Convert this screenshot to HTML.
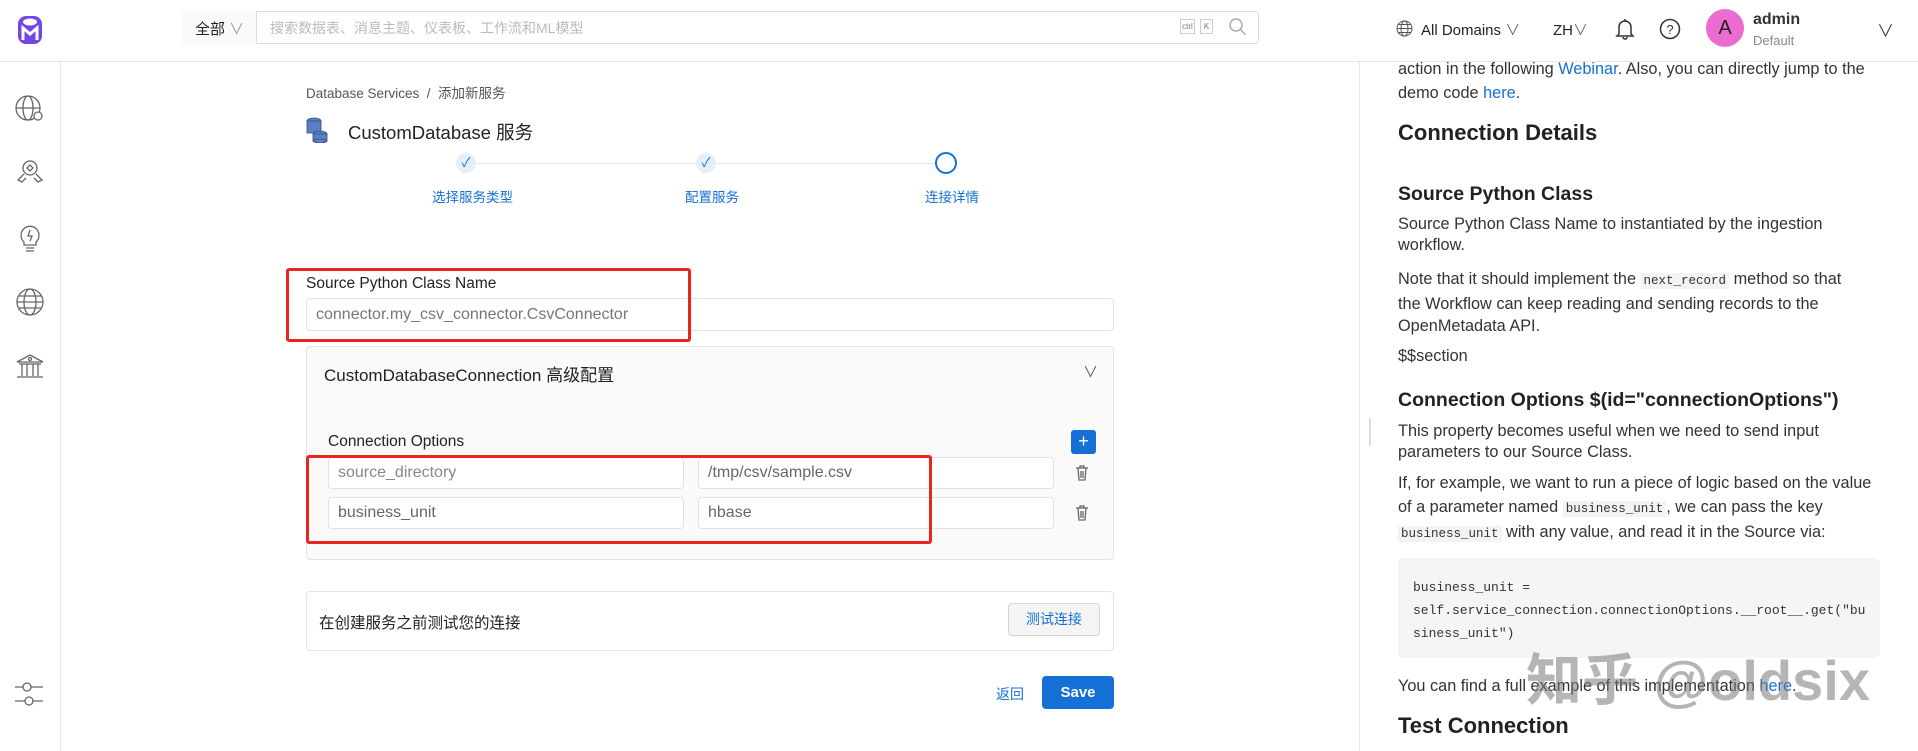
<!DOCTYPE html>
<html><head><meta charset="utf-8"><style>
*{box-sizing:border-box;margin:0;padding:0}
body{width:1918px;height:751px;overflow:hidden;background:#fff;font-family:"Liberation Sans","Noto Sans CJK SC",sans-serif;color:#222;position:relative}
.a{position:absolute}
.hdr{left:0;top:0;width:1918px;height:62px;border-bottom:1px solid #e6e6e6;background:#fff}
.side{left:0;top:62px;width:61px;height:689px;border-right:1px solid #e8e8e8}
.inp{position:absolute;border:1px solid #e2e2e2;border-radius:4px;background:#fff;font-size:16px;color:#777;padding-left:9px;display:flex;align-items:center}
.rp{left:1398px;font-size:16.3px;color:#333;line-height:24px;width:510px;white-space:nowrap}
.h2{font-size:22px;font-weight:bold;color:#222}
.h3{font-size:19.5px;font-weight:bold;color:#222}
code{font-family:"Liberation Mono",monospace;font-size:12.5px;background:#f3f3f3;padding:1px 3px}
a{color:#1570d6;text-decoration:none}
</style></head><body>
<div class="a hdr"></div>
<svg class="a" style="left:17px;top:14px" width="26" height="32" viewBox="0 0 26 32"><rect x="1" y="2" width="24" height="28" rx="8" fill="#7147e8"/><ellipse cx="13" cy="8" rx="7" ry="3.5" fill="#fff"/><path d="M6 26V14l7 6 7-6v12" stroke="#fff" stroke-width="3" fill="none"/></svg>
<div class="a" style="left:182px;top:11px;width:1077px;height:33px;border:1px solid #ddd;border-radius:4px"></div>
<div class="a" style="left:182px;top:11px;width:75px;height:33px;border-right:1px solid #ddd;background:#fafafa;font-size:15px;padding:7px 0 0 13px">全部 <span style="color:#999">∨</span></div>
<div class="a" style="left:270px;top:18px;font-size:14px;color:#bbb">搜索数据表、消息主题、仪表板、工作流和ML模型</div>
<div class="a" style="left:1180px;top:19px;width:15px;height:15px;border:1px solid #ccc;font-size:8px;color:#777;text-align:center;line-height:13px">ctrl</div>
<div class="a" style="left:1200px;top:19px;width:13px;height:15px;border:1px solid #ccc;font-size:8px;color:#777;text-align:center;line-height:13px">K</div>
<svg class="a" style="left:1228px;top:17px" width="20" height="20"><circle cx="8" cy="8" r="6" stroke="#aaa" stroke-width="1.5" fill="none"/><path d="M12.5 12.5l5 5" stroke="#aaa" stroke-width="1.5"/></svg>
<svg class="a" style="left:1396px;top:20px" width="17" height="17"><circle cx="8.5" cy="8.5" r="7.5" stroke="#555" fill="none"/><ellipse cx="8.5" cy="8.5" rx="3.5" ry="7.5" stroke="#555" fill="none"/><path d="M1 8.5h15M2.5 4.5h12M2.5 12.5h12" stroke="#555"/></svg>
<div class="a" style="left:1421px;top:19px;font-size:15px">All Domains <span style="color:#666">∨</span></div>
<div class="a" style="left:1553px;top:19px;font-size:15px">ZH<span style="color:#666">∨</span></div>
<svg class="a" style="left:1614px;top:17px" width="22" height="24"><path d="M5 17V10a6 6 0 0 1 12 0v7l2 2H3z M9 20a2 2 0 0 0 4 0 M11 2v2" stroke="#333" stroke-width="1.5" fill="none"/></svg>
<svg class="a" style="left:1659px;top:18px" width="22" height="22"><circle cx="11" cy="11" r="9.5" stroke="#333" stroke-width="1.5" fill="none"/><text x="11" y="16" font-size="13" text-anchor="middle" fill="#333" font-family="Liberation Sans">?</text></svg>
<div class="a" style="left:1706px;top:9px;width:38px;height:38px;border-radius:50%;background:#ec6bd0;color:#222;font-size:20px;text-align:center;line-height:38px">A</div>
<div class="a" style="left:1753px;top:11px;font-size:16px;font-weight:bold;color:#333">admin</div>
<div class="a" style="left:1753px;top:33px;font-size:13px;color:#888">Default</div>
<div class="a" style="left:1877px;top:17px;font-size:17px;color:#444">∨</div>
<div class="a side"></div>
<svg class="a" style="left:14px;top:94px" width="34" height="300" fill="none" stroke="#666" stroke-width="1.3">
<circle cx="14" cy="14" r="12"/><ellipse cx="14" cy="14" rx="5" ry="12"/><path d="M2 14h24"/><circle cx="24" cy="22" r="4" fill="#fff"/>
<g transform="translate(0,64)"><circle cx="16" cy="10" r="7"/><path d="M13 10l3-3 3 3-3 3z M10 16l-6 6 4 2 4-4 M22 16l6 6-4 2-4-4"/></g>
<g transform="translate(0,128)"><path d="M10 20a9 9 0 1 1 12 0v3h-12z M12 26h8 M12 29h8 M16 8l-2 6h4l-2 5"/></g>
<g transform="translate(0,194)"><circle cx="16" cy="14" r="13"/><ellipse cx="16" cy="14" rx="6" ry="13"/><path d="M3 14h26 M5 8h22 M5 20h22"/></g>
<g transform="translate(0,258)"><path d="M3 10L16 3l13 7z M5 12h22 M8 12v12 M13 12v12 M19 12v12 M24 12v12 M3 25h26"/><circle cx="16" cy="7" r="1.5"/></g>
</svg>
<svg class="a" style="left:15px;top:680px" width="30" height="30" fill="none" stroke="#666" stroke-width="1.3"><path d="M0 7h8M16 7h12M0 21h10M18 21h10"/><circle cx="12" cy="7" r="4"/><circle cx="14" cy="21" r="4"/></svg>
<div class="a" style="left:306px;top:82px;font-size:13.5px;color:#555">Database Services &nbsp;/&nbsp; 添加新服务</div>
<svg class="a" style="left:306px;top:117px" width="22" height="26"><g fill="#5b7fc0" stroke="#2f4f8a" stroke-width=".8"><ellipse cx="8" cy="4" rx="7" ry="3"/><rect x="1" y="4" width="14" height="12"/><ellipse cx="14" cy="17" rx="7" ry="3"/><rect x="7" y="17" width="14" height="7"/><ellipse cx="14" cy="24" rx="7" ry="2"/></g></svg>
<div class="a" style="left:348px;top:119px;font-size:18.5px;color:#222">CustomDatabase 服务</div>
<div class="a" style="left:476px;top:163px;width:460px;height:1px;background:#dde8f5"></div>
<div class="a" style="left:456px;top:153px;width:20px;height:20px;border-radius:50%;background:#e5eefa;color:#1570d6;font-size:13px;text-align:center;line-height:20px">✓</div>
<div class="a" style="left:696px;top:153px;width:20px;height:20px;border-radius:50%;background:#e5eefa;color:#1570d6;font-size:13px;text-align:center;line-height:20px">✓</div>
<div class="a" style="left:935px;top:152px;width:22px;height:22px;border-radius:50%;border:2.5px solid #1570d6"></div>
<div class="a" style="left:432px;top:186px;font-size:13.5px;color:#1570d6">选择服务类型</div>
<div class="a" style="left:685px;top:186px;font-size:13.5px;color:#1570d6">配置服务</div>
<div class="a" style="left:925px;top:186px;font-size:13.5px;color:#1570d6">连接详情</div>
<div class="a" style="left:306px;top:275px;font-size:15.5px;color:#222">Source Python Class Name</div>
<div class="inp" style="left:306px;top:298px;width:808px;height:33px">connector.my_csv_connector.CsvConnector</div>
<div class="a" style="left:286px;top:268px;width:405px;height:74px;border:3px solid #e8261f;border-radius:3px"></div>
<div class="a" style="left:306px;top:346px;width:808px;height:214px;border:1px solid #e3e3e3;border-radius:4px;background:#fafafa"></div>
<div class="a" style="left:324px;top:361px;font-size:17px;color:#222">CustomDatabaseConnection 高级配置</div>
<div class="a" style="left:1083px;top:361px;font-size:15px;color:#555">∨</div>
<div class="a" style="left:328px;top:433px;font-size:15.5px;color:#222">Connection Options</div>
<div class="a" style="left:1071px;top:430px;width:25px;height:24px;border-radius:3px;background:#1570d6;color:#fff;font-size:18px;text-align:center;line-height:23px">+</div>
<div class="inp" style="left:328px;top:457px;width:356px;height:32px;color:#888">source_directory</div>
<div class="inp" style="left:698px;top:457px;width:356px;height:32px;color:#666">/tmp/csv/sample.csv</div>
<div class="inp" style="left:328px;top:497px;width:356px;height:32px;color:#666">business_unit</div>
<div class="inp" style="left:698px;top:497px;width:356px;height:32px;color:#666">hbase</div>
<svg class="a" style="left:1075px;top:465px" width="14" height="16" fill="none" stroke="#666" stroke-width="1.3"><path d="M1 3h12M5 3V1h4v2M3 3l1 12h6l1-12M6 6v7M8 6v7"/></svg>
<svg class="a" style="left:1075px;top:505px" width="14" height="16" fill="none" stroke="#666" stroke-width="1.3"><path d="M1 3h12M5 3V1h4v2M3 3l1 12h6l1-12M6 6v7M8 6v7"/></svg>
<div class="a" style="left:306px;top:455px;width:626px;height:89px;border:3px solid #e8261f;border-radius:3px"></div>
<div class="a" style="left:306px;top:591px;width:808px;height:60px;border:1px solid #e3e3e3;border-radius:4px"></div>
<div class="a" style="left:319px;top:611px;font-size:15.5px;color:#222">在创建服务之前测试您的连接</div>
<div class="a" style="left:1008px;top:603px;width:92px;height:33px;border:1px solid #d5d5d5;border-radius:4px;background:#f5f5f5;color:#1570d6;font-size:14px;text-align:center;line-height:31px">测试连接</div>
<div class="a" style="left:996px;top:684px;font-size:14px;color:#1570d6">返回</div>
<div class="a" style="left:1042px;top:676px;width:72px;height:33px;border-radius:4px;background:#1570d6;color:#fff;font-size:15px;font-weight:bold;text-align:center;line-height:33px">Save</div>
<div class="a" style="left:1359px;top:62px;width:1px;height:689px;background:#e8e8e8"></div>
<div class="a" style="left:1369px;top:418px;width:2px;height:28px;background:#ddd"></div>
<div class="a rp" style="top:57px">action in the following <a>Webinar</a>. Also, you can directly jump to the</div>
<div class="a rp" style="top:81px">demo code <a>here</a>.</div>
<div class="a h2" style="left:1398px;top:120px">Connection Details</div>
<div class="a h3" style="left:1398px;top:183px">Source Python Class</div>
<div class="a rp" style="top:214px;line-height:21px">Source Python Class Name to instantiated by the ingestion<br>workflow.</div>
<div class="a rp" style="top:268px;line-height:22.5px">Note that it should implement the <code>next_record</code> method so that<br>the Workflow can keep reading and sending records to the<br>OpenMetadata API.</div>
<div class="a rp" style="top:344px">$$section</div>
<div class="a h3" style="left:1398px;top:389px">Connection Options $(id="connectionOptions")</div>
<div class="a rp" style="top:421px;line-height:20.5px">This property becomes useful when we need to send input<br>parameters to our Source Class.</div>
<div class="a rp" style="top:472px;line-height:23.5px">If, for example, we want to run a piece of logic based on the value<br>of a parameter named <code>business_unit</code>, we can pass the key<br><code>business_unit</code> with any value, and read it in the Source via:</div>
<div class="a" style="left:1398px;top:558px;width:482px;height:100px;background:#f5f5f6;border-radius:5px;font-family:'Liberation Mono',monospace;font-size:13px;color:#333;padding:18px 0 0 15px;line-height:23px">business_unit =<br>self.service_connection.connectionOptions.__root__.get("bu<br>siness_unit")</div>
<div class="a rp" style="top:674px">You can find a full example of this implementation <a>here</a>.</div>
<div class="a" style="left:1526px;top:636px;font-size:56px;color:rgba(120,120,120,.55);white-space:nowrap;font-weight:bold">知乎 @oldsix</div>
<div class="a h2" style="left:1398px;top:713px">Test Connection</div>
</body></html>
